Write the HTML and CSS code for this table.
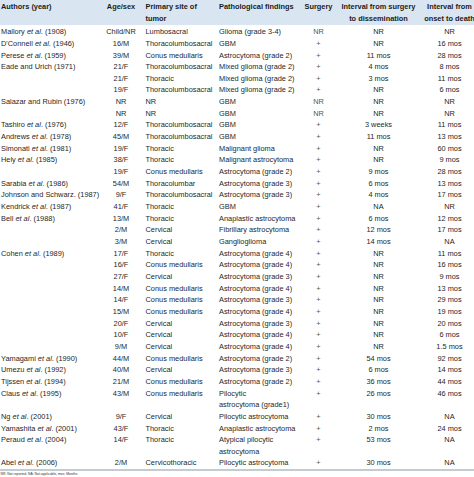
FILE: index.html
```html
<!DOCTYPE html>
<html>
<head>
<meta charset="utf-8">
<link rel="stylesheet" href="styles.css">
</head>
<body>
<div class="page">
<table class="tbl">
<colgroup>
<col class="w1"><col class="w2"><col class="w3"><col class="w4"><col class="w5"><col class="w6"><col class="w7">
</colgroup>
<thead>
<tr>
<th class="c1">Authors (year)</th>
<th class="c2">Age/sex</th>
<th class="c3">Primary site of<br>tumor</th>
<th class="c4">Pathological findings</th>
<th class="c5">Surgery</th>
<th class="c6">Interval from surgery<br>to dissemination</th>
<th class="c7">Interval from<br>onset to death</th>
</tr>
</thead>
<tbody>
<tr><td class="c1">Mallory <i>et al</i>. (1908)</td><td class="c2">Child/NR</td><td class="c3">Lumbosacral</td><td class="c4">Glioma (grade 3-4)</td><td class="c5">NR</td><td class="c6">NR</td><td class="c7">NR</td></tr>
<tr><td class="c1">D'Connell <i>et al</i>. (1946)</td><td class="c2">16/M</td><td class="c3">Thoracolumbosacral</td><td class="c4">GBM</td><td class="c5">+</td><td class="c6">NR</td><td class="c7">16 mos</td></tr>
<tr><td class="c1">Perese <i>et al</i>. (1959)</td><td class="c2">39/M</td><td class="c3">Conus medullaris</td><td class="c4">Astrocytoma (grade 2)</td><td class="c5">+</td><td class="c6">11 mos</td><td class="c7">28 mos</td></tr>
<tr><td class="c1">Eade and Urich (1971)</td><td class="c2">21/F</td><td class="c3">Thoracolumbosacral</td><td class="c4">Mixed glioma (grade 2)</td><td class="c5">+</td><td class="c6">4 mos</td><td class="c7">8 mos</td></tr>
<tr><td class="c1"></td><td class="c2">21/F</td><td class="c3">Thoracic</td><td class="c4">Mixed glioma (grade 2)</td><td class="c5">+</td><td class="c6">3 mos</td><td class="c7">11 mos</td></tr>
<tr><td class="c1"></td><td class="c2">19/F</td><td class="c3">Thoracolumbosacral</td><td class="c4">Mixed glioma (grade 2)</td><td class="c5">+</td><td class="c6">NR</td><td class="c7">6 mos</td></tr>
<tr><td class="c1">Salazar and Rubin (1976)</td><td class="c2">NR</td><td class="c3">NR</td><td class="c4">GBM</td><td class="c5">NR</td><td class="c6">NR</td><td class="c7">NR</td></tr>
<tr><td class="c1"></td><td class="c2">NR</td><td class="c3">NR</td><td class="c4">GBM</td><td class="c5">NR</td><td class="c6">NR</td><td class="c7">NR</td></tr>
<tr><td class="c1">Tashiro <i>et al</i>. (1976)</td><td class="c2">12/F</td><td class="c3">Thoracolumbosacral</td><td class="c4">GBM</td><td class="c5">+</td><td class="c6">3 weeks</td><td class="c7">11 mos</td></tr>
<tr><td class="c1">Andrews <i>et al</i>. (1978)</td><td class="c2">45/M</td><td class="c3">Thoracolumbosacral</td><td class="c4">GBM</td><td class="c5">+</td><td class="c6">11 mos</td><td class="c7">13 mos</td></tr>
<tr><td class="c1">Simonati <i>et al</i>. (1981)</td><td class="c2">19/F</td><td class="c3">Thoracic</td><td class="c4">Malignant glioma</td><td class="c5">+</td><td class="c6">NR</td><td class="c7">60 mos</td></tr>
<tr><td class="c1">Hely <i>et al</i>. (1985)</td><td class="c2">38/F</td><td class="c3">Thoracic</td><td class="c4">Malignant astrocytoma</td><td class="c5">+</td><td class="c6">NR</td><td class="c7">9 mos</td></tr>
<tr><td class="c1"></td><td class="c2">19/F</td><td class="c3">Conus medullaris</td><td class="c4">Astrocytoma (grade 2)</td><td class="c5">+</td><td class="c6">9 mos</td><td class="c7">28 mos</td></tr>
<tr><td class="c1">Sarabia <i>et al</i>. (1986)</td><td class="c2">54/M</td><td class="c3">Thoracolumbar</td><td class="c4">Astrocytoma (grade 3)</td><td class="c5">+</td><td class="c6">6 mos</td><td class="c7">13 mos</td></tr>
<tr><td class="c1">Johnson and Schwarz. (1987)</td><td class="c2">9/F</td><td class="c3">Thoracolumbosacral</td><td class="c4">Astrocytoma (grade 3)</td><td class="c5">+</td><td class="c6">4 mos</td><td class="c7">17 mos</td></tr>
<tr><td class="c1">Kendrick <i>et al</i>. (1987)</td><td class="c2">41/F</td><td class="c3">Thoracic</td><td class="c4">GBM</td><td class="c5">+</td><td class="c6">NA</td><td class="c7">NR</td></tr>
<tr><td class="c1">Bell <i>et al</i>. (1988)</td><td class="c2">13/M</td><td class="c3">Thoracic</td><td class="c4">Anaplastic astrocytoma</td><td class="c5">+</td><td class="c6">6 mos</td><td class="c7">12 mos</td></tr>
<tr><td class="c1"></td><td class="c2">2/M</td><td class="c3">Cervical</td><td class="c4">Fibrillary astrocytoma</td><td class="c5">+</td><td class="c6">12 mos</td><td class="c7">17 mos</td></tr>
<tr><td class="c1"></td><td class="c2">3/M</td><td class="c3">Cervical</td><td class="c4">Ganglioglioma</td><td class="c5">+</td><td class="c6">14 mos</td><td class="c7">NA</td></tr>
<tr><td class="c1">Cohen <i>et al</i>. (1989)</td><td class="c2">17/F</td><td class="c3">Thoracic</td><td class="c4">Astrocytoma (grade 4)</td><td class="c5">+</td><td class="c6">NR</td><td class="c7">11 mos</td></tr>
<tr><td class="c1"></td><td class="c2">16/F</td><td class="c3">Conus medullaris</td><td class="c4">Astrocytoma (grade 4)</td><td class="c5">+</td><td class="c6">NR</td><td class="c7">16 mos</td></tr>
<tr><td class="c1"></td><td class="c2">27/F</td><td class="c3">Cervical</td><td class="c4">Astrocytoma (grade 3)</td><td class="c5">+</td><td class="c6">NR</td><td class="c7">9 mos</td></tr>
<tr><td class="c1"></td><td class="c2">14/M</td><td class="c3">Conus medullaris</td><td class="c4">Astrocytoma (grade 4)</td><td class="c5">+</td><td class="c6">NR</td><td class="c7">13 mos</td></tr>
<tr><td class="c1"></td><td class="c2">14/F</td><td class="c3">Conus medullaris</td><td class="c4">Astrocytoma (grade 3)</td><td class="c5">+</td><td class="c6">NR</td><td class="c7">29 mos</td></tr>
<tr><td class="c1"></td><td class="c2">15/M</td><td class="c3">Conus medullaris</td><td class="c4">Astrocytoma (grade 4)</td><td class="c5">+</td><td class="c6">NR</td><td class="c7">19 mos</td></tr>
<tr><td class="c1"></td><td class="c2">20/F</td><td class="c3">Cervical</td><td class="c4">Astrocytoma (grade 3)</td><td class="c5">+</td><td class="c6">NR</td><td class="c7">20 mos</td></tr>
<tr><td class="c1"></td><td class="c2">10/F</td><td class="c3">Cervical</td><td class="c4">Astrocytoma (grade 4)</td><td class="c5">+</td><td class="c6">NR</td><td class="c7">6 mos</td></tr>
<tr><td class="c1"></td><td class="c2">9/M</td><td class="c3">Cervical</td><td class="c4">Astrocytoma (grade 4)</td><td class="c5">+</td><td class="c6">NR</td><td class="c7">1.5 mos</td></tr>
<tr><td class="c1">Yamagami <i>et al</i>. (1990)</td><td class="c2">44/M</td><td class="c3">Conus medullaris</td><td class="c4">Astrocytoma (grade 2)</td><td class="c5">+</td><td class="c6">54 mos</td><td class="c7">92 mos</td></tr>
<tr><td class="c1">Umezu <i>et al</i>. (1992)</td><td class="c2">40/M</td><td class="c3">Cervical</td><td class="c4">Astrocytoma (grade 3)</td><td class="c5">+</td><td class="c6">6 mos</td><td class="c7">14 mos</td></tr>
<tr><td class="c1">Tijssen <i>et al</i>. (1994)</td><td class="c2">21/M</td><td class="c3">Conus medullaris</td><td class="c4">Astrocytoma (grade 2)</td><td class="c5">+</td><td class="c6">36 mos</td><td class="c7">44 mos</td></tr>
<tr><td class="c1">Claus <i>et al</i>. (1995)</td><td class="c2">43/M</td><td class="c3">Conus medullaris</td><td class="c4">Pilocytic<br>astrocytoma (grade1)</td><td class="c5">+</td><td class="c6">26 mos</td><td class="c7">46 mos</td></tr>
<tr><td class="c1">Ng <i>et al</i>. (2001)</td><td class="c2">9/F</td><td class="c3">Cervical</td><td class="c4">Pilocytic astrocytoma</td><td class="c5">+</td><td class="c6">30 mos</td><td class="c7">NA</td></tr>
<tr><td class="c1">Yamashita <i>et al</i>. (2001)</td><td class="c2">43/F</td><td class="c3">Thoracic</td><td class="c4">Anaplastic astrocytoma</td><td class="c5">+</td><td class="c6">2 mos</td><td class="c7">24 mos</td></tr>
<tr><td class="c1">Peraud <i>et al</i>. (2004)</td><td class="c2">14/F</td><td class="c3">Thoracic</td><td class="c4">Atypical pilocytic<br>astrocytoma</td><td class="c5">+</td><td class="c6">53 mos</td><td class="c7">NA</td></tr>
<tr><td class="c1">Abel <i>et al</i>. (2006)</td><td class="c2">2/M</td><td class="c3">Cervicothoracic</td><td class="c4">Pilocytic astrocytoma</td><td class="c5">+</td><td class="c6">30 mos</td><td class="c7">NA</td></tr>
</tbody>
</table>
<div class="note">NR: Not reported, NA: Not applicable, mos: Months</div>
</div>
</body>
</html>
```
FILE: styles.css
```css
html, body {
  margin: 0;
  padding: 0;
  overflow: hidden;
  background: #ffffff;
}
body {
  width: 474px;
  height: 477px;
  font-family: "Liberation Sans", Arial, sans-serif;
  font-size: 7.4px;
  color: #1f1f1f;
}
.page {
  width: 480px;
}
.tbl {
  border-collapse: collapse;
  table-layout: fixed;
  width: 477px;
}
.w1 { width: 106px; }
.w2 { width: 30px; }
.w3 { width: 78px; }
.w4 { width: 88px; }
.w5 { width: 33px; }
.w6 { width: 87px; }
.w7 { width: 55px; }
.tbl th,
.tbl td {
  padding: 0;
  line-height: 11.65px;
  vertical-align: top;
  white-space: nowrap;
  overflow: visible;
}
.tbl thead th {
  background: #d9e6f2;
  font-weight: bold;
  color: #1c1c1c;
  line-height: 11.5px;
  padding-top: 1px;
  padding-bottom: 1px;
  height: 23px;
}
.tbl tbody tr:first-child td {
  padding-top: 1.2px;
}
.c1 { text-align: left; padding-left: 1px !important; }
.c2 { text-align: center; }
.c3 { text-align: left; padding-left: 9.5px !important; }
.c4 { text-align: left; padding-left: 5px !important; }
.c5 { text-align: center; }
.c6 { text-align: center; }
.c7 { text-align: center; }
.tbl td.c5 { color: #555555; }
.note {
  border-top: 2px solid #c3ccd3;
  width: 474px;
  font-size: 3.4px;
  line-height: 6px;
  padding-left: 0.5px;
  color: #333333;
}
```
